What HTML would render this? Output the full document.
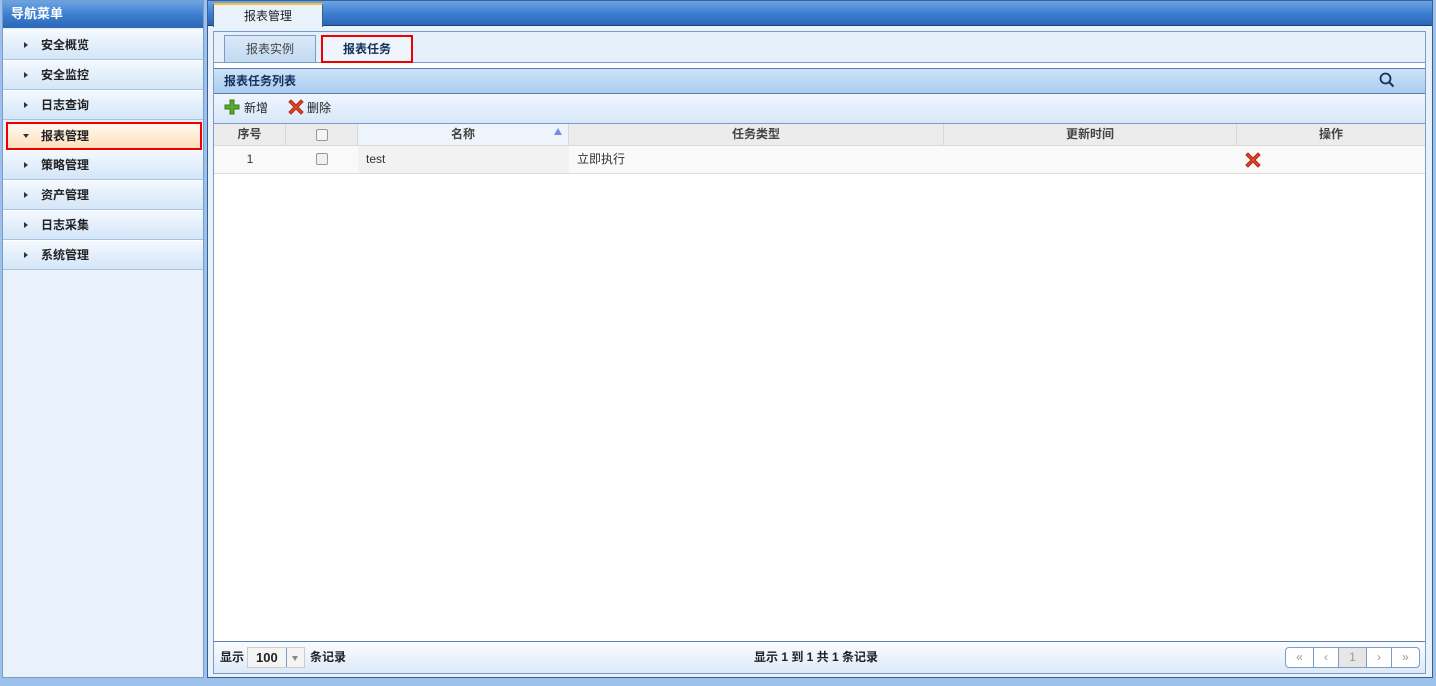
<!DOCTYPE html>
<html><head><meta charset="utf-8"><style>
*{box-sizing:border-box;margin:0;padding:0}
body{width:1436px;height:686px;background:#9cc2ec;font-family:"Liberation Sans","Noto Sans CJK SC",sans-serif;font-size:12px;color:#222;position:relative;overflow:hidden}
.a{position:absolute}
.side{left:2px;top:0;width:202px;height:678px;background:#e9f1fb;border:1px solid #7a9cc8}
.sh{left:0;top:0;width:200px;height:27px;background:linear-gradient(#6aa4e4,#3f7fd0 50%,#2a66b8);color:#fff;font-weight:bold;font-size:13px;line-height:26px;padding-left:8px}
.mi{left:0;width:200px;height:30px;background:linear-gradient(#f3f8fe,#d4e6f8);border-top:1px solid #fff;border-bottom:1px solid #a9c3e2;font-weight:bold;line-height:29px;padding-left:38px;color:#222}
.mi:before{content:"";position:absolute;left:21px;top:11px;border-left:4px solid #333;border-top:3.5px solid transparent;border-bottom:3.5px solid transparent}
.mi.on{background:linear-gradient(#fff7ee,#fde0bd);border:2px solid #e00;left:3px;width:196px;padding-left:33px;line-height:24px;height:28px}
.mi.on:before{left:15px;top:10px;border-top:4px solid #333;border-left:3.5px solid transparent;border-right:3.5px solid transparent;border-bottom:0}
.main{left:207px;top:0;width:1226px;height:678px;background:#e9f1fb;border:1px solid #3b5f93}
.tb{left:0;top:0;width:1224px;height:25px;background:linear-gradient(#6aa4e4,#3f7fd0 50%,#2a66b8);border-bottom:1px solid #1f3f70}
.t1{left:5px;top:2px;width:110px;height:24px;background:#e9f1fb;border-top:2px solid #f3c13a;border-left:1px solid #3b5f93;border-right:1px solid #3b5f93;text-align:center;line-height:22px}
.frame{left:5px;top:30px;width:1213px;height:643px;border:1px solid #7a9cc8;background:#fff}
</style></head><body>
<div class="a side">
<div class="a sh">导航菜单</div>
<div class="a mi" style="top:29px">安全概览</div>
<div class="a mi" style="top:59px">安全监控</div>
<div class="a mi" style="top:89px">日志查询</div>
<div class="a mi on" style="top:121px">报表管理</div>
<div class="a mi" style="top:149px">策略管理</div>
<div class="a mi" style="top:179px">资产管理</div>
<div class="a mi" style="top:209px">日志采集</div>
<div class="a mi" style="top:239px">系统管理</div>
</div>
<div class="a main">
<div class="a tb"></div>
<div class="a t1">报表管理</div>
<div class="a frame">
 <div class="a" style="left:0;top:0;width:1211px;height:31px;background:#e6f0fb;border-bottom:1px solid #7a9cc8"></div>
 <div class="a" style="left:10px;top:3px;width:92px;height:28px;background:linear-gradient(#dbe9f8,#c2d9f1);border:1px solid #7a9cc8;text-align:center;line-height:27px;color:#444">报表实例</div>
 <div class="a" style="left:107px;top:3px;width:92px;height:28px;background:#eef5fd;border:2px solid #e00;text-align:center;line-height:24px;font-weight:bold;color:#15305c">报表任务</div>
 <div class="a" style="left:0;top:36px;width:1211px;height:26px;background:linear-gradient(#cde3f8,#a9ccef);border-top:1px solid #5a7fb0;border-bottom:1px solid #5a7fb0;font-weight:bold;line-height:24px;padding-left:10px;color:#15305c">报表任务列表
  <svg class="a" style="right:30px;top:3px" width="16" height="16" viewBox="0 0 16 16"><circle cx="6.5" cy="6.5" r="5" fill="none" stroke="#15305c" stroke-width="1.8"/><path d="M10 10l4.5 4.5" stroke="#15305c" stroke-width="2"/></svg></div>
 <div class="a" style="left:0;top:62px;width:1211px;height:30px;background:linear-gradient(#f0f6fe,#d7e7f8);border-bottom:1px solid #7a9cc8">
  <svg class="a" style="left:10px;top:5px" width="16" height="16"><path d="M6 1h4v5h5v4h-5v5h-4v-5h-5v-4h5z" fill="#5aa832" stroke="#3a7a20"/></svg>
  <span class="a" style="left:30px;top:5px">新增</span>
  <svg class="a" style="left:74px;top:5px" width="16" height="16"><path d="M3 1l5 5 5-5 2 2-5 5 5 5-2 2-5-5-5 5-2-2 5-5-5-5z" fill="#e0452a" stroke="#b02a18"/></svg>
  <span class="a" style="left:93px;top:5px">删除</span>
 </div>
 <div class="a" style="left:0;top:92px;width:1211px;height:22px;background:#ececec;border-bottom:1px solid #d8d8d8;font-weight:bold;color:#444;line-height:21px">
  <span class="a" style="left:0;width:72px;text-align:center;border-right:1px solid #d8d8d8;height:21px">序号</span>
  <span class="a" style="left:72px;width:72px;border-right:1px solid #d8d8d8;height:21px"><i class="a" style="left:30px;top:5px;width:12px;height:12px;border:1px solid #999;border-radius:2px;background:#f4f4f4"></i></span>
  <span class="a" style="left:144px;width:211px;text-align:center;border-right:1px solid #d8d8d8;height:21px;background:#eef4fc">名称<i class="a" style="right:6px;top:4px;border-bottom:7px solid #7a8ce0;border-left:4px solid transparent;border-right:4px solid transparent"></i></span>
  <span class="a" style="left:355px;width:375px;text-align:center;border-right:1px solid #d8d8d8;height:21px">任务类型</span>
  <span class="a" style="left:730px;width:293px;text-align:center;border-right:1px solid #d8d8d8;height:21px">更新时间</span>
  <span class="a" style="left:1023px;width:188px;text-align:center;height:21px">操作</span>
 </div>
 <div class="a" style="left:0;top:114px;width:1211px;height:28px;background:#f9f9f9;border-bottom:1px solid #ddd;line-height:27px;color:#333">
  <span class="a" style="left:0;width:72px;text-align:center">1</span>
  <i class="a" style="left:102px;top:7px;width:12px;height:12px;border:1px solid #999;border-radius:2px;background:#f0f0f0"></i>
  <span class="a" style="left:144px;width:211px;height:27px;background:#f2f2f2;padding-left:8px">test</span>
  <span class="a" style="left:363px">立即执行</span>
  <svg class="a" style="left:1031px;top:6px" width="16" height="16"><path d="M3 1l5 5 5-5 2 2-5 5 5 5-2 2-5-5-5 5-2-2 5-5-5-5z" fill="#e0452a" stroke="#b02a18"/></svg>
 </div>
 <div class="a" style="left:0;top:609px;width:1211px;height:32px;background:linear-gradient(#fafcff,#dce9f8);border-top:1px solid #5a7fb0;font-weight:bold;line-height:31px">
  <span class="a" style="left:6px">显示</span>
  <span class="a" style="left:33px;top:5px;width:58px;height:21px;border:1px solid #ccc;background:#f4f4f4;line-height:19px;padding-left:8px;font-size:13px">100<i class="a" style="left:38px;top:0;width:1px;height:19px;background:#7a9cc8"></i><i class="a" style="left:44px;top:8px;border-top:5px solid #888;border-left:3px solid transparent;border-right:3px solid transparent"></i></span>
  <span class="a" style="left:96px">条记录</span>
  <span class="a" style="left:540px">显示 1 到 1 共 1 条记录</span>
  <div class="a" style="left:1071px;top:5px;width:135px;height:21px;border:1px solid #7a9cc8;border-radius:4px;background:#fff;display:flex;font-weight:normal;color:#999;line-height:19px;overflow:hidden">
   <span style="width:28px;text-align:center;border-right:1px solid #7a9cc8">«</span><span style="width:25px;text-align:center;border-right:1px solid #7a9cc8">‹</span><span style="width:28px;text-align:center;border-right:1px solid #7a9cc8;background:#e6e6e6">1</span><span style="width:25px;text-align:center;border-right:1px solid #7a9cc8">›</span><span style="flex:1;text-align:center">»</span>
  </div>
 </div>
</div>
</div>
</body></html>
